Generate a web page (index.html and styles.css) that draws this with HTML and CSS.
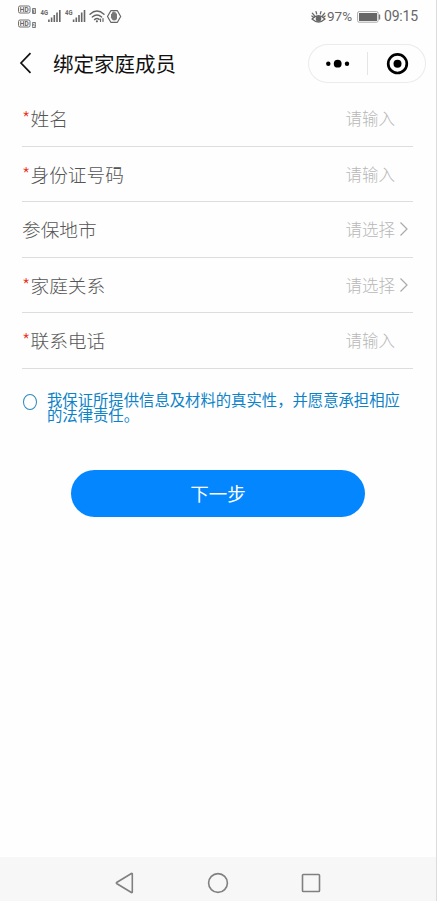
FILE: index.html
```html
<!DOCTYPE html>
<html lang="zh-CN">
<head>
<meta charset="utf-8">
<title>绑定家庭成员</title>
<link rel="stylesheet" href="styles.css">
</head>
<body>
<div class="screen">
  <div class="status">
    <svg class="signals" width="106" height="26" viewBox="17 3 106 26">
      <g fill="none" stroke="#707070" stroke-width="1">
        <rect x="18.5" y="6" width="11.5" height="7" rx="1.5"/>
        <rect x="18.5" y="20" width="11.5" height="7" rx="1.5"/>
      </g>
      <g class="tiny">
        <text x="19.8" y="12.3" textLength="9">HD</text>
        <text x="19.8" y="26.3" textLength="9">HD</text>
      </g>
      <rect x="32" y="8" width="4" height="6" rx="1" fill="#777"/>
      <rect x="32" y="22" width="4" height="6" rx="1" fill="#777"/>
      <g class="sub"><text x="32.8" y="13">1</text><text x="32.6" y="27">2</text></g>
      <g class="net"><text x="40.5" y="15" textLength="7.5" lengthAdjust="spacingAndGlyphs">4G</text><text x="65" y="15" textLength="7.5" lengthAdjust="spacingAndGlyphs">4G</text></g>
      <g stroke="#666" stroke-width="1.6">
        <path d="M48.9 22v-2.5M51.6 22v-4.5M54.3 22v-7M57 22v-9.5M59.8 22V10"/>
        <path d="M73.6 22v-2.5M76.3 22v-4.5M79 22v-7M81.7 22v-9.5M84.5 22V10"/>
      </g>
      <g fill="none" stroke="#666" stroke-width="1.4" stroke-linecap="round">
        <path d="M90 14.2q7-6.2 14 0M92.3 17q4.7-4 9.3 0M94.5 19.6q2.5-2 4.6-.2"/>
        <path d="M100.5 19v2.5M103 18.5v3" stroke-width="1.2"/>
      </g>
      <circle cx="96.9" cy="21.3" r="1.1" fill="#666"/>
      <path d="M110.8 10.7h6.6l3.3 5.8-3.3 5.8h-6.6l-3.3-5.8z" fill="none" stroke="#666" stroke-width="1.2" stroke-linejoin="round"/>
      <path d="M111 17v-3.2h1v-1.5h1.2v-.8h1.4v.8h1.2v1.2h1.2v5q-.2 2-2.8 2-1.5 0-2.3-1.2l-1.2-2.3z" fill="#777"/>
    </svg>
    <div class="power">
      <svg width="15" height="14" viewBox="0 0 15 14" fill="none" stroke="#666" stroke-width="1.2" stroke-linecap="round">
        <path d="M1 9q6.5-6.5 13 0Q7.500 15 1 9M1.300 3.200l2 2.300M5 1.500l.7 2.500M10 1.500 9.300 4M13.700 3.200l-2 2.300M.8 6l1.500 1M14.200 6l-1.500 1"/>
        <circle cx="7.500" cy="8.700" r="2.200" fill="#666"/>
      </svg>
      <span class="percent">97%</span>
      <svg class="battery" width="24" height="12" viewBox="0 0 24 12">
        <rect x=".6" y=".6" width="20.500" height="10.600" rx="1.500" fill="#fff" stroke="#aaa"/>
        <rect x="2" y="2" width="18" height="8" fill="#666"/>
        <path d="M22.500 3.500v5" stroke="#777" stroke-width="1.400"/>
      </svg>
      <span class="time">09:15</span>
    </div>
  </div>

  <div class="header">
    <svg class="back" width="14" height="22" viewBox="0 0 14 22" fill="none" stroke="#111" stroke-width="1.700"><path d="M11.500 1.200 2 11l9.500 9.800"/></svg>
    <h1>绑定家庭成员</h1>
    <div class="capsule">
      <svg width="118" height="39" viewBox="0 0 118 39">
        <circle cx="20.300" cy="19.700" r="2.200"/><circle cx="29.700" cy="19.700" r="3.900"/><circle cx="39" cy="19.700" r="2.200"/>
        <path d="M59.500 8v23" stroke="#e5e5e5"/>
        <circle cx="89.500" cy="19.700" r="9.300" fill="none" stroke="#000" stroke-width="2.700"/>
        <circle cx="89.500" cy="19.700" r="4"/>
      </svg>
    </div>
  </div>

  <div class="form">
    <div class="row"><span class="label"><i>*</i>姓名</span><span class="value">请输入</span></div>
    <div class="row"><span class="label"><i>*</i>身份证号码</span><span class="value">请输入</span></div>
    <div class="row"><span class="label">参保地市</span><span class="value">请选择</span><svg class="chevron" width="10" height="16" viewBox="0 0 10 16"><path d="m1.500 1.500 6.500 6.500-6.500 6.500"/></svg></div>
    <div class="row"><span class="label"><i>*</i>家庭关系</span><span class="value">请选择</span><svg class="chevron" width="10" height="16" viewBox="0 0 10 16"><path d="m1.500 1.500 6.500 6.500-6.500 6.500"/></svg></div>
    <div class="row"><span class="label"><i>*</i>联系电话</span><span class="value">请输入</span></div>
  </div>

  <div class="agree">
    <span class="radio"></span>
    <p>我保证所提供信息及材料的真实性，并愿意承担相应<br>的法律责任。</p>
  </div>

  <div class="next">下一步</div>

  <div class="navbar">
    <svg width="22" height="22" viewBox="0 0 22 22"><path d="M18.300 1.800v18.400q-.2.600-.9.300L2.600 11.500q-.6-.5 0-1L17.400 1.500q.7-.3.900.3z"/></svg>
    <svg width="22" height="22" viewBox="0 0 22 22"><circle cx="11" cy="11" r="9.400"/></svg>
    <svg width="22" height="22" viewBox="0 0 22 22"><rect x="2.500" y="2.500" width="17" height="17" rx=".8"/></svg>
  </div>
</div>
</body>
</html>
```
FILE: styles.css
```css
* {
  box-sizing: border-box;
}

body {
  margin: 0;
  background: #fff;
  font-family: "Noto Sans CJK SC", sans-serif;
}

.screen {
  display: flex;
  flex-direction: column;
  width: 437px;
  height: 901px;
  overflow: hidden;
  border-right: 1px solid #dcdcdc;
  background: #fefefe;
}

.status {
  display: flex;
  justify-content: space-between;
  height: 36px;
  padding: 3px 18px 0 17px;
}

.tiny,
.sub,
.net {
  font-family: Roboto, sans-serif;
  font-weight: 700;
  fill: #666;
}

.tiny {
  font-size: 6.5px;
}

.sub {
  font-size: 5px;
  fill: #fff;
}

.net {
  font-size: 6.5px;
}

.power {
  display: flex;
  align-items: center;
  height: 27px;
  color: #666;
  font: 14px/27px Roboto, sans-serif;
}

.percent {
  width: 26px;
  margin-left: 1px;
  font-size: 13.5px;
}

.battery {
  margin: 0 3px 0 4px;
}

.time {
  width: 34px;
  font-size: 14px;
  letter-spacing: -0.2px;
}

.header {
  display: flex;
  align-items: center;
  height: 55px;
  padding: 0 10px 1px 19px;
}

.back {
  display: block;
}

h1 {
  flex: 1;
  margin: 0 0 0 20px;
  color: #111;
  font-size: 20.5px;
  font-weight: 400;
  line-height: 30px;
}

.capsule {
  width: 118px;
  height: 39px;
  border-radius: 20px;
  box-shadow: inset 0 0 0 1px #ebebeb;
}

.capsule svg {
  display: block;
}

.form {
  margin: 0 23px 0 22px;
}

.row {
  display: flex;
  align-items: center;
  height: 55.5px;
  padding-right: 4px;
  border-bottom: 1px solid #ddd;
}

.label {
  flex: 1;
  color: #555;
  font-size: 18.7px;
  font-weight: 300;
  line-height: 28px;
}

.label i {
  display: inline-block;
  width: 8.5px;
  color: #e93323;
  font-style: normal;
}

.value {
  color: #b8b8b8;
  font-size: 16.5px;
  font-weight: 300;
  line-height: 26px;
}

.value:last-child {
  margin-right: 14px;
}

.chevron {
  margin-left: 4px;
  fill: none;
  stroke: #aaa;
  stroke-width: 1.2;
}

.agree {
  display: flex;
  margin: 23px 0 0 23px;
  color: #0c82c8;
}

.radio {
  width: 14px;
  height: 16px;
  margin: 2px 10px 0 0;
  border: 1px solid #2e86bd;
  border-radius: 50%;
}

.agree p {
  margin: 0;
  font-size: 15.35px;
  font-weight: 400;
  line-height: 15.5px;
  white-space: nowrap;
}

.next {
  width: 294px;
  height: 47px;
  margin: 47px 0 0 71px;
  border-radius: 24px;
  background: #0486fe;
  color: #fff;
  font-size: 18.5px;
  line-height: 46px;
  text-align: center;
}

.navbar {
  display: flex;
  gap: 71px;
  height: 44px;
  margin-top: auto;
  padding: 15px 0 0 114px;
  background: #f7f7f7;
}

.navbar svg {
  fill: none;
  stroke: #808080;
  stroke-width: 1.6;
}
```
